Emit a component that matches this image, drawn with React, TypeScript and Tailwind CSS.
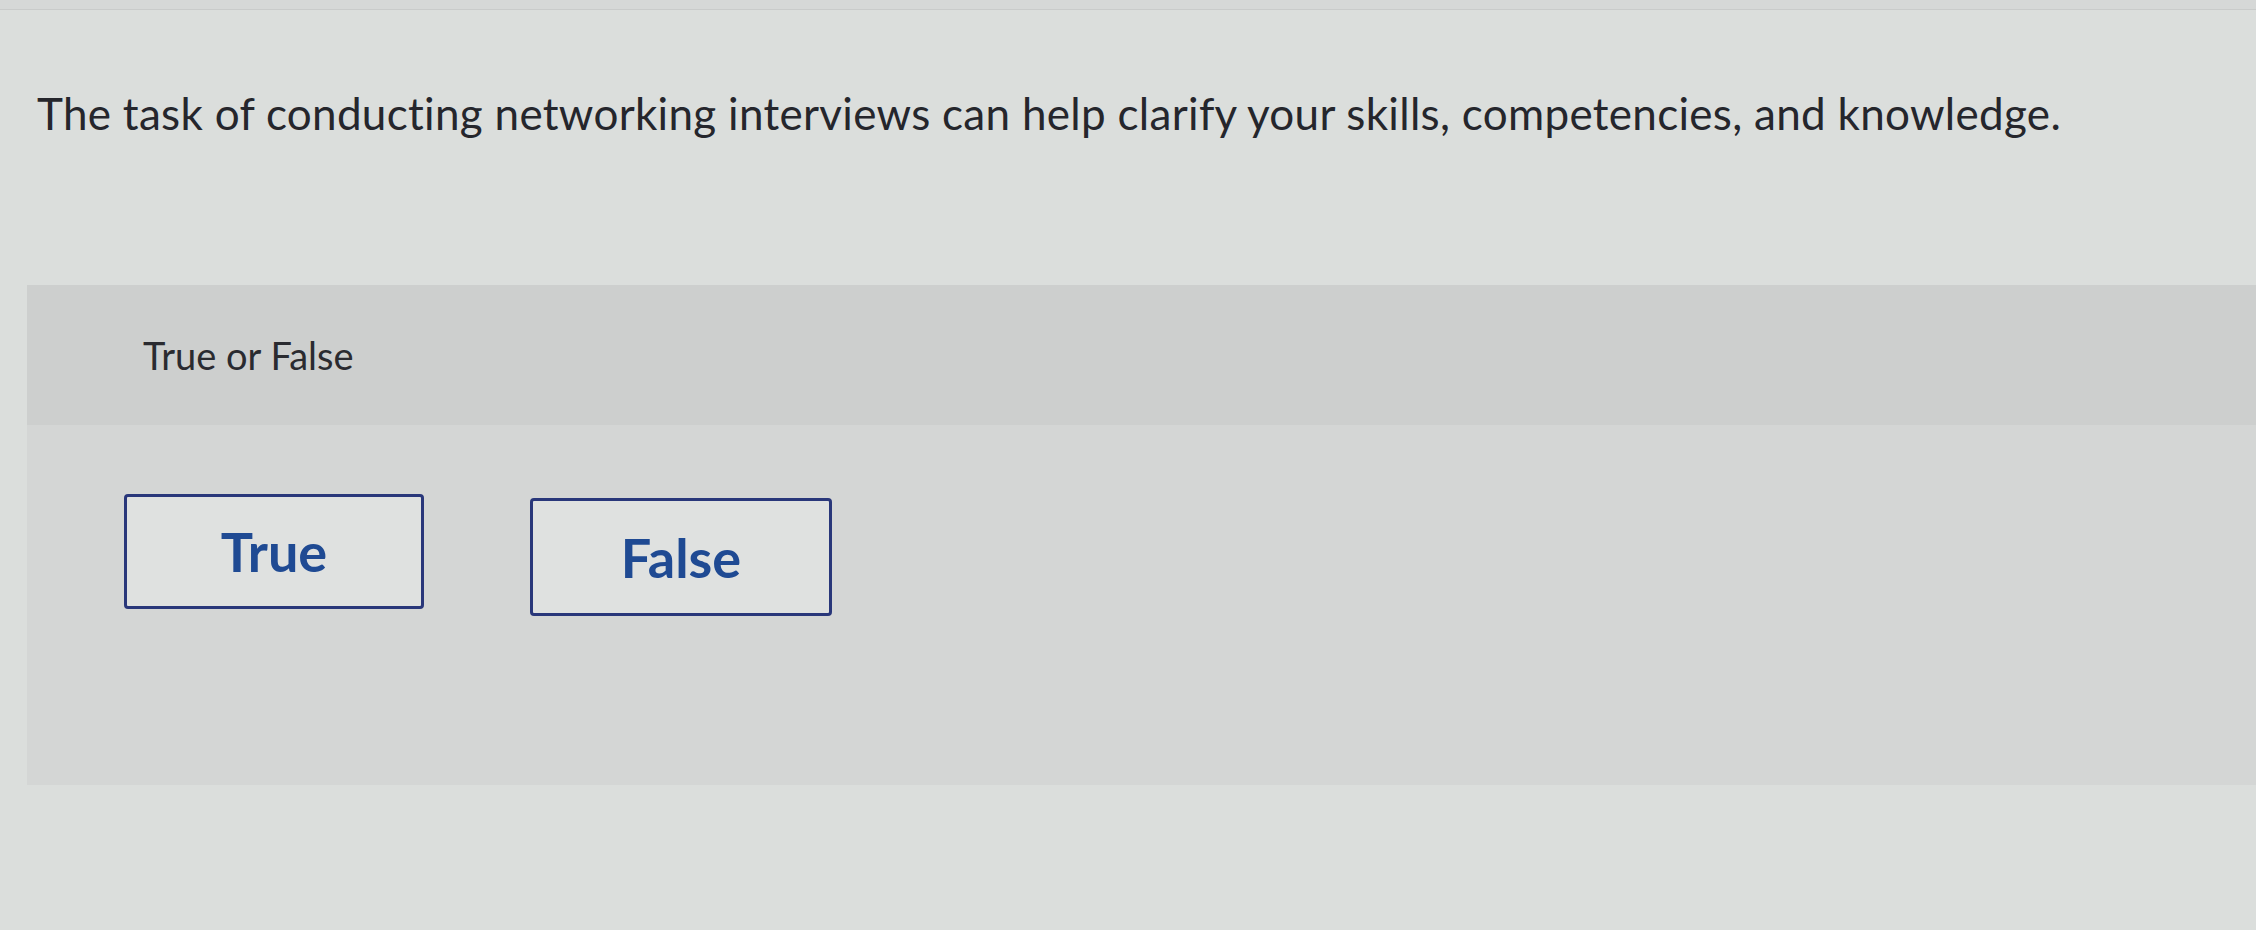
export default function App() {
  const font = { fontFamily: 'Lato, "Open Sans", "Liberation Sans", sans-serif' };
  return (
    <div className="min-h-screen w-full bg-[#dbdedc] text-[#2a2b30]" style={font}>
      <div className="h-[10px] border-b border-[#c9cbca] bg-[#d6d8d7]" />
      <div className="pl-[37px] pt-[76px]">
        <p className="text-[44px] leading-[54px] tracking-[0.3px] text-[#25262c]">
          The task of conducting networking interviews can help clarify your skills, competencies, and knowledge.
        </p>
      </div>
      <div className="ml-[27px] mt-[145px] bg-[#d4d6d5]">
        <div className="flex h-[140px] items-center bg-[#cdcfce] pl-[116px]">
          <span className="text-[38px] text-[#2a2b30]">True or False</span>
        </div>
        <div className="flex h-[360px] items-start gap-[106px] pl-[97px] pt-[69px]">
          <button className="flex h-[115px] w-[300px] items-center justify-center rounded-[4px] border-[3px] border-[#29377a] bg-[#dfe1e0] text-[54px] font-bold text-[#1f4a93]">
            True
          </button>
          <button className="mt-[4px] flex h-[118px] w-[302px] items-center justify-center rounded-[4px] border-[3px] border-[#29377a] bg-[#dfe1e0] text-[54px] font-bold text-[#1f4a93]">
            False
          </button>
        </div>
      </div>
    </div>
  );
}
